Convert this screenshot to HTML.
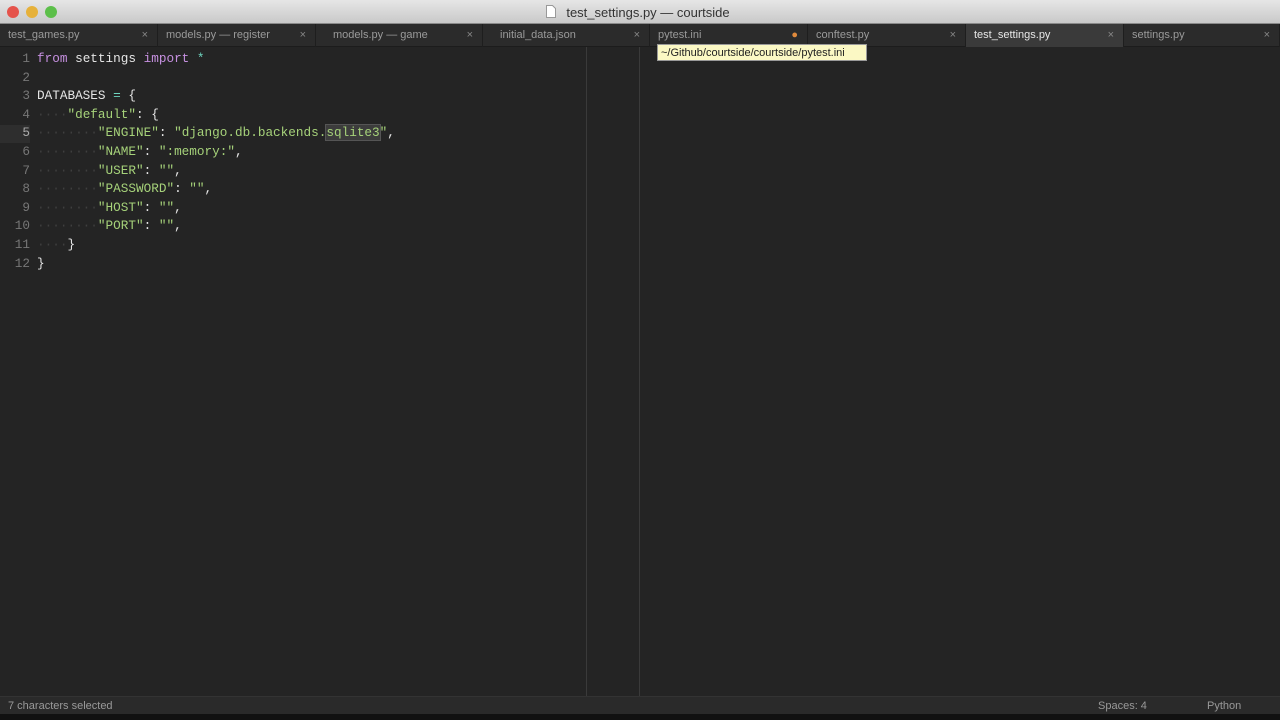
<!DOCTYPE html>
<html><head><meta charset="utf-8"><style>
*{margin:0;padding:0;box-sizing:border-box}
body{width:1280px;height:720px;background:#242424;position:relative;overflow:hidden;font-family:"Liberation Sans",sans-serif}
.title{position:absolute;left:0;top:0;width:1280px;height:24px;background:linear-gradient(#e6e6e6,#c9c9c9);border-bottom:1px solid #8a8a8a}
.title .t{position:absolute;left:0;width:1280px;text-align:center;top:5px;font-size:13px;color:#333}
.dot{position:absolute;top:6px;width:12px;height:12px;border-radius:50%}
.tabs{position:absolute;top:24px;left:0;width:1280px;height:23px;background:#2b2b2b;border-bottom:1px solid #1c1c1c}
.tab{position:absolute;top:0;height:23px;width:158px;border-right:1px solid #1e1e1e;font-size:11px;color:#9a9a9a;padding:5px 0 0 8px}
.tab .x{position:absolute;right:9px;top:5px;font-size:11px;color:#888}
.tab.a{background:#3a3a3a;color:#e8e8e8}
.code{position:absolute;top:50px;left:0;font-family:"Liberation Mono",monospace;font-size:12.7px;line-height:18.6px;color:#e6e6e6;white-space:pre}
.ln{position:absolute;left:0;width:30px;text-align:right;color:#777}
.l{position:absolute;left:37px}
.k{color:#c690e0}.s{color:#a6d27a}.o{color:#6fd6c0}.g{color:#3f3f3f}
.vl{position:absolute;top:47px;height:650px;width:1px;background:#3a3a3a}
.status{position:absolute;top:696px;left:0;width:1280px;height:18px;background:#2a2a2a;border-top:1px solid #333;font-size:11px;color:#999}
</style></head><body>
<div class="title"><div class="dot" style="left:7px;background:#e5534b"></div><div class="dot" style="left:26px;background:#e6b13a"></div><div class="dot" style="left:45px;background:#5cbf4a"></div>
<svg style="position:absolute;left:546px;top:5px" width="10" height="13"><path d="M0.5 0.5H6.5L9.5 3.5V12.5H0.5Z" fill="#fff" stroke="#999"/></svg>
<div class="t" style="padding-left:16px">test_settings.py — courtside</div></div>
<div class="tabs">
<div class="tab" style="left:0">test_games.py<span class="x">×</span></div>
<div class="tab" style="left:158px">models.py — register<span class="x">×</span></div>
<div class="tab" style="left:325px">models.py — game<span class="x">×</span></div>
<div class="tab" style="left:492px">initial_data.json<span class="x">×</span></div>
<div class="tab" style="left:650px">pytest.ini<span class="x" style="color:#e08a3c">●</span></div>
<div class="tab" style="left:808px">conftest.py<span class="x">×</span></div>
<div class="tab a" style="left:966px">test_settings.py<span class="x">×</span></div>
<div class="tab" style="left:1124px;width:156px">settings.py<span class="x">×</span></div>
</div>
<div style="position:absolute;left:657px;top:44px;width:210px;height:17px;background:#fbf8c4;border:1px solid #999;font-size:11px;color:#222;padding:2px 3px">~/Github/courtside/courtside/pytest.ini</div>
<div style="position:absolute;left:0;top:125px;width:30px;height:18px;background:#2e2e2e"></div>
<div class="code">
<div class="ln" style="top:0">1</div><div class="l" style="top:0"><span class="k">from</span> settings <span class="k">import</span> <span class="o">*</span></div>
<div class="ln" style="top:18.6px">2</div>
<div class="ln" style="top:37.2px">3</div><div class="l" style="top:37.2px">DATABASES <span class="o">=</span> {</div>
<div class="ln" style="top:55.8px">4</div><div class="l" style="top:55.8px"><span class="g">····</span><span class="s">"default"</span>: {</div>
<div class="ln" style="top:74.4px;color:#aaa">5</div><div class="l" style="top:74.4px"><span class="g">········</span><span class="s">"ENGINE"</span>: <span class="s">"django.db.backends.<span style="background:#3c3c3c;outline:1px solid #555">sqlite3</span>"</span>,</div>
<div class="ln" style="top:93px">6</div><div class="l" style="top:93px"><span class="g">········</span><span class="s">"NAME"</span>: <span class="s">":memory:"</span>,</div>
<div class="ln" style="top:111.6px">7</div><div class="l" style="top:111.6px"><span class="g">········</span><span class="s">"USER"</span>: <span class="s">""</span>,</div>
<div class="ln" style="top:130.2px">8</div><div class="l" style="top:130.2px"><span class="g">········</span><span class="s">"PASSWORD"</span>: <span class="s">""</span>,</div>
<div class="ln" style="top:148.8px">9</div><div class="l" style="top:148.8px"><span class="g">········</span><span class="s">"HOST"</span>: <span class="s">""</span>,</div>
<div class="ln" style="top:167.4px">10</div><div class="l" style="top:167.4px"><span class="g">········</span><span class="s">"PORT"</span>: <span class="s">""</span>,</div>
<div class="ln" style="top:186px">11</div><div class="l" style="top:186px"><span class="g">····</span>}</div>
<div class="ln" style="top:204.6px">12</div><div class="l" style="top:204.6px">}</div>
</div>
<div class="vl" style="left:586px"></div><div class="vl" style="left:639px"></div>
<div class="status"><span style="position:absolute;left:8px;top:3px">7 characters selected</span><span style="position:absolute;left:1098px;top:3px">Spaces: 4</span><span style="position:absolute;left:1207px;top:3px">Python</span></div>
<div style="position:absolute;top:714px;left:0;width:1280px;height:6px;background:#111"></div>
</body></html>
